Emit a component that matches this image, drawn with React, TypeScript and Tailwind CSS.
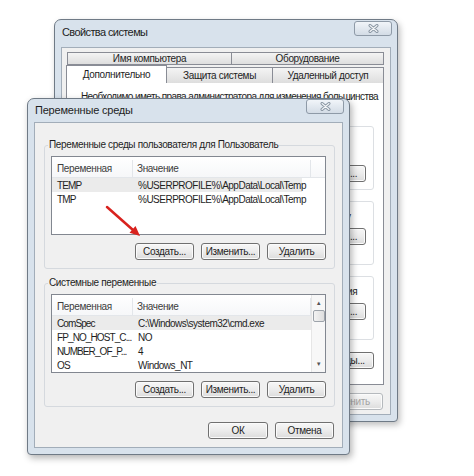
import type { ReactNode } from "react";

type Row = { name: string; value: string; hot?: boolean };

const userRows: Row[] = [
  { name: "TEMP", value: "%USERPROFILE%\\AppData\\Local\\Temp", hot: true },
  { name: "TMP", value: "%USERPROFILE%\\AppData\\Local\\Temp" },
];

const systemRows: Row[] = [
  { name: "ComSpec", value: "C:\\Windows\\system32\\cmd.exe", hot: true },
  { name: "FP_NO_HOST_C...", value: "NO" },
  { name: "NUMBER_OF_P...", value: "4" },
  { name: "OS", value: "Windows_NT" },
];

function Btn({ children, className = "", disabled = false }: { children: ReactNode; className?: string; disabled?: boolean }) {
  return (
    <div
      className={`flex h-[17px] shrink-0 items-center justify-center rounded-[3px] border bg-linear-to-b from-[#f7f7f7] via-[#ececec] to-[#dcdcdc] shadow-[inset_0_0_0_1px_#fbfbfb] ${
        disabled ? "border-[#b5b9bd] text-[#a3a3a3]" : "border-[#707070] text-[#1e1e1e]"
      } ${className}`}
    >
      {children}
    </div>
  );
}

function CloseBtn() {
  return (
    <div className="-mr-px flex h-[15px] w-[38px] items-center justify-center rounded-[3px] border border-[#8e9aa7] bg-linear-to-b from-[#f1f5f9] to-[#d3dce6]">
      <svg width="11" height="9" viewBox="0 0 11 9">
        <path d="M2 1.5 L9 7.5 M9 1.5 L2 7.5" stroke="#8996a3" strokeWidth="3" strokeLinecap="round" />
        <path d="M2 1.5 L9 7.5 M9 1.5 L2 7.5" stroke="#f5f7f9" strokeWidth="1.1" strokeLinecap="round" />
      </svg>
    </div>
  );
}

function ListView({ rows, scroll = false, hotWidth }: { rows: Row[]; scroll?: boolean; hotWidth: string }) {
  return (
    <div className="flex h-[79px] border border-[#828790] bg-white">
      <div className="flex flex-1 flex-col overflow-hidden">
        <div className="flex h-[21px] shrink-0 border-b border-[#e3e6ea] bg-linear-to-b from-white to-[#f6f7f9] pt-[3px] text-[#3c3c3c]">
          <div className="flex h-full w-[81px] items-center border-r border-[#e3e6ea] pl-[5px]">Переменная</div>
          <div className="flex h-full w-[178px] items-center border-r border-[#e3e6ea] pl-[4px]">Значение</div>
        </div>
        <div className="flex flex-col">
          {rows.map((r) => (
            <div key={r.name} className={`flex h-[14px] shrink-0 items-center tracking-[-0.5px] ${r.hot ? "bg-[#ebebeb] " + hotWidth : ""}`}>
              <span className="w-[81px] shrink-0 whitespace-nowrap pl-[5px] tracking-[-0.9px]">{r.name}</span>
              <span className="whitespace-nowrap pl-[5px]">{r.value}</span>
            </div>
          ))}
        </div>
      </div>
      {scroll && (
        <div className="flex w-[14px] shrink-0 flex-col items-center border-l border-[#e6e6e6] bg-[#f7f7f7] text-[6px] text-[#555]">
          <span className="mt-[4px] leading-[8px]">▲</span>
          <div className="mt-[3px] h-[12px] w-[12px] rounded-[2px] border border-[#9da3aa] bg-linear-to-r from-[#f3f3f3] to-[#dedede]" />
          <span className="mt-auto mb-[4px] leading-[8px]">▼</span>
        </div>
      )}
    </div>
  );
}

function EnvGroup({ title, rows, scroll, hotWidth, className = "" }: { title: string; rows: Row[]; scroll?: boolean; hotWidth: string; className?: string }) {
  return (
    <fieldset className={`mx-[7px] ml-[9px] rounded-[3px] border border-[#d5d9de] pb-[8px] pl-[6px] pr-[8px] ${className}`}>
      <legend className="-ml-[3px] px-px leading-[12px]">{title}</legend>
      <div className="mt-[5px]">
        <ListView rows={rows} scroll={scroll} hotWidth={hotWidth} />
      </div>
      <div className="mt-[8px] flex justify-end gap-[7px]">
        <Btn className="w-[59px]">Создать...</Btn>
        <Btn className="w-[59px]">Изменить...</Btn>
        <Btn className="w-[59px]">Удалить</Btn>
      </div>
    </fieldset>
  );
}

function SettingsGroup({ title, text }: { title: string; text: string }) {
  return (
    <fieldset className="mt-[5px] h-[70px] rounded-[3px] border border-[#dcdfe3] pb-[8px] pl-[9px] pr-[7px] first:mt-[7px]">
      <legend className="-ml-[3px] px-px leading-[12px]">{title}</legend>
      <p className="mt-[4px] leading-[12px]">{text}</p>
      <div className="mt-[5px] flex justify-end">
        <Btn className="h-[16px] w-[75px]">Параметры...</Btn>
      </div>
    </fieldset>
  );
}

function Tab({ children, className = "" }: { children: ReactNode; className?: string }) {
  return (
    <div className={`flex items-center justify-center border border-[#898c95] bg-linear-to-b from-[#f4f4f4] to-[#dedede] ${className}`}>
      {children}
    </div>
  );
}

export default function App() {
  return (
    <div className="relative h-[476px] w-[474px] overflow-hidden bg-white font-['Liberation_Sans',Arial,sans-serif] text-[10px] tracking-[-0.35px] text-[#1e1e1e]">
      {/* back window: System properties */}
      <div className="absolute left-[54px] top-[19px] flex h-[403px] w-[344px] flex-col rounded-t-[7px] rounded-b-[4px] border border-[#6f7a86] bg-[#d8e2ec] px-[6px] pb-[6px] shadow-[2px_3px_6px_rgba(0,0,0,0.25)]">
        <div className="flex h-[27px] items-start justify-between">
          <span className="mt-[6px] pl-px text-[11px] leading-[13px] tracking-[-0.6px]">Свойства системы</span>
          <div className="mt-px">
            <CloseBtn />
          </div>
        </div>
        <div className="flex flex-1 flex-col border border-[#a2adb9] bg-[#f0f0f0] pl-[4px] pr-[6px] pt-[4px]">
          <div className="flex h-[13px] pl-px">
            <Tab className="w-[165px]">Имя компьютера</Tab>
            <Tab className="w-[152px] border-l-0">Оборудование</Tab>
          </div>
          <div className="relative z-10 -mb-px flex h-[18px] items-end">
            <div className="flex h-[18px] w-[101px] items-center justify-center border border-b-0 border-[#898c95] bg-white">Дополнительно</div>
            <Tab className="h-[16px] w-[106px] border-b-0 border-l-0">Защита системы</Tab>
            <Tab className="h-[16px] w-[111px] border-b-0 border-l-0">Удаленный доступ</Tab>
          </div>
          <div className="flex h-[303px] flex-col border border-[#898c95] bg-white px-[9px] pt-[8px]">
            <p className="-mr-[8px] pl-[5px] leading-[12px] tracking-[-0.6px]">
              Необходимо иметь права администратора для изменения большинства перечисленных параметров.
            </p>
            <SettingsGroup title="Быстродействие" text="Визуальные эффекты, использование процессора, оперативной и виртуальной памяти" />
            <SettingsGroup title="Профили пользователей" text="Параметры рабочего стола, относящиеся ко входу в систему" />
            <SettingsGroup title="Загрузка и восстановление" text="Загрузка и восстановление системы, отладочная информация" />
            <div className="mt-[12px] flex justify-end">
              <Btn className="w-[112px]">Переменные среды...</Btn>
            </div>
          </div>
          <div className="mt-[8px] flex justify-end gap-[6px] pr-px">
            <Btn className="h-[16px] w-[75px]">ОК</Btn>
            <Btn className="h-[16px] w-[75px]">Отмена</Btn>
            <Btn disabled className="h-[16px] w-[75px]">Применить</Btn>
          </div>
        </div>
      </div>

      {/* front window: Environment variables */}
      <div className="absolute left-[27px] top-[98px] flex h-[357px] w-[323px] flex-col rounded-t-[7px] rounded-b-[4px] border border-[#6f7a86] bg-[#d8e2ec] px-[6px] pb-[6px] shadow-[2px_3px_7px_rgba(0,0,0,0.3)]">
        <div className="flex h-[23px] items-start justify-between">
          <span className="mt-[5px] pl-px text-[11px] leading-[13px] tracking-[-0.2px]">Переменные среды</span>
          <CloseBtn />
        </div>
        <div className="flex flex-1 flex-col border border-[#a2adb9] bg-[#f0f0f0]">
          <EnvGroup
            className="mt-[16px]"
            title="Переменные среды пользователя для Пользователь"
            rows={userRows}
            hotWidth="w-[250px]"
          />
          <EnvGroup className="mt-[8px]" title="Системные переменные" rows={systemRows} scroll hotWidth="w-[259px]" />
          <div className="mr-[8px] mt-[15px] flex justify-end gap-[7px]">
            <Btn className="w-[60px]">ОК</Btn>
            <Btn className="w-[59px]">Отмена</Btn>
          </div>
        </div>
      </div>

      {/* red arrow pointing at the "Создать..." button */}
      <svg className="pointer-events-none absolute left-0 top-0" width="474" height="476">
        <line x1="107" y1="207" x2="133" y2="230" stroke="#d8221e" strokeWidth="2.5" strokeLinecap="round" />
        <polygon points="140,236 129.5,232.8 135.5,226" fill="#d8221e" />
      </svg>
    </div>
  );
}
